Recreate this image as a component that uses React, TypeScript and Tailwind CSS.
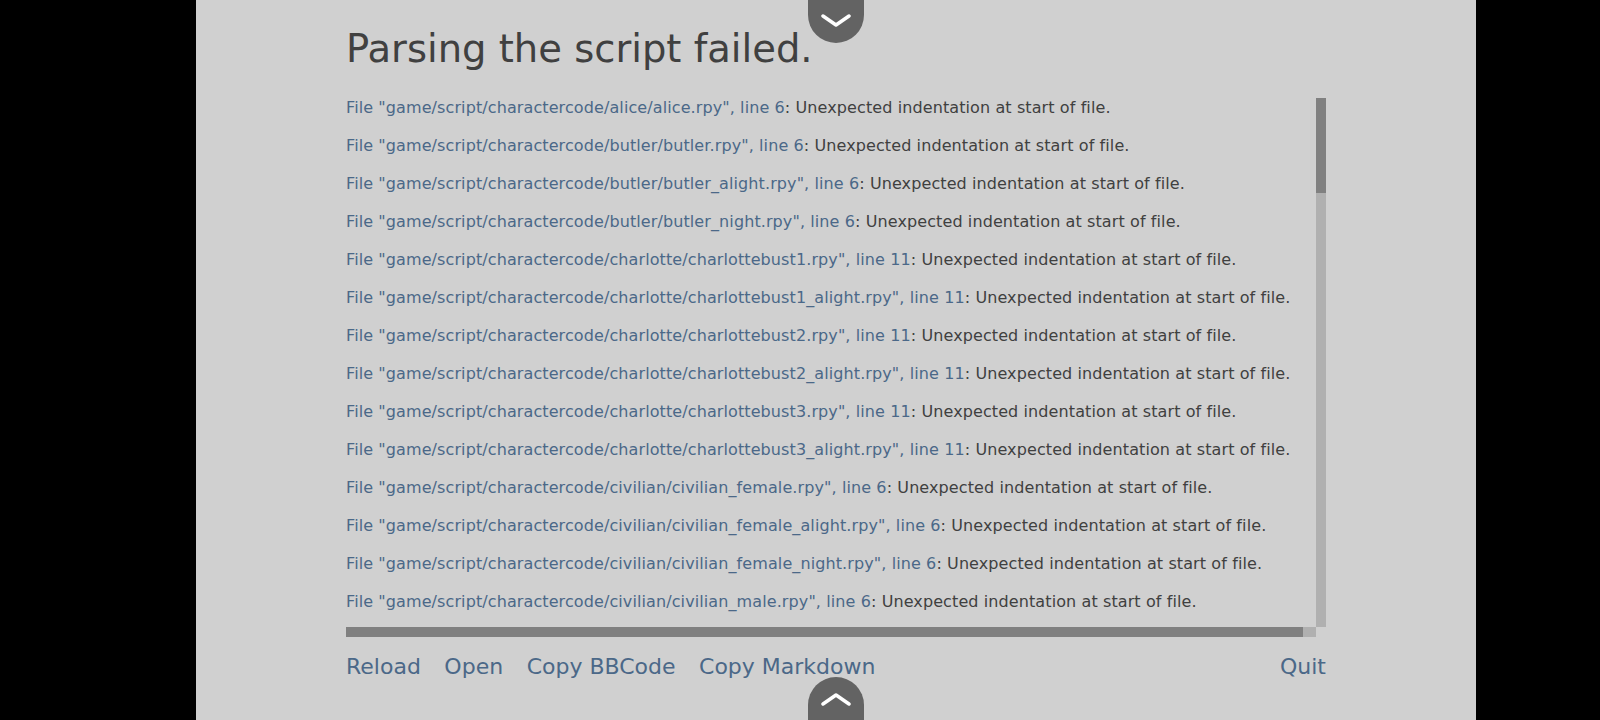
import React from 'react';

const errors: { file: string; line: number }[] = [
  { file: 'game/script/charactercode/alice/alice.rpy', line: 6 },
  { file: 'game/script/charactercode/butler/butler.rpy', line: 6 },
  { file: 'game/script/charactercode/butler/butler_alight.rpy', line: 6 },
  { file: 'game/script/charactercode/butler/butler_night.rpy', line: 6 },
  { file: 'game/script/charactercode/charlotte/charlottebust1.rpy', line: 11 },
  { file: 'game/script/charactercode/charlotte/charlottebust1_alight.rpy', line: 11 },
  { file: 'game/script/charactercode/charlotte/charlottebust2.rpy', line: 11 },
  { file: 'game/script/charactercode/charlotte/charlottebust2_alight.rpy', line: 11 },
  { file: 'game/script/charactercode/charlotte/charlottebust3.rpy', line: 11 },
  { file: 'game/script/charactercode/charlotte/charlottebust3_alight.rpy', line: 11 },
  { file: 'game/script/charactercode/civilian/civilian_female.rpy', line: 6 },
  { file: 'game/script/charactercode/civilian/civilian_female_alight.rpy', line: 6 },
  { file: 'game/script/charactercode/civilian/civilian_female_night.rpy', line: 6 },
  { file: 'game/script/charactercode/civilian/civilian_male.rpy', line: 6 },
];

const Chevron: React.FC<{ up?: boolean }> = ({ up }) => (
  <svg width="32" height="14" viewBox="0 0 32 14" fill="none">
    <path
      d={up ? 'M3 12 L16 3 L29 12' : 'M3 2 L16 11 L29 2'}
      stroke="white"
      strokeWidth="3.5"
      strokeLinecap="round"
      strokeLinejoin="round"
    />
  </svg>
);

const App: React.FC = () => {
  const actions = ['Reload', 'Open', 'Copy BBCode', 'Copy Markdown'];

  return (
    <div className="w-[1600px] h-[720px] bg-black flex overflow-hidden" style={{ fontFamily: '"DejaVu Sans", Verdana, sans-serif' }}>
      <div className="relative ml-[196px] w-[1280px] h-full bg-[#d0d0d0] px-[150px] pt-[30px] flex flex-col">
        {/* top toggle */}
        <div className="absolute top-0 left-1/2 -translate-x-1/2 w-[56px] h-[43px] rounded-b-[28px] bg-[#636363] flex items-end justify-center pb-[15px]">
          <Chevron />
        </div>

        <h1 className="text-[38.5px] leading-[38px] text-[#404040]">Parsing the script failed.</h1>

        <div className="mt-[30px] flex flex-col">
          <div className="flex h-[529px]">
            <div className="flex-1 overflow-hidden pt-[1px] flex flex-col gap-[20px] text-[16px] leading-[18px] tracking-[0.1px] whitespace-nowrap">
              {errors.map((e) => (
                <div key={e.file}>
                  <span className="text-[#4b6888]">
                    File "{e.file}", line {e.line}
                  </span>
                  <span className="text-[#404040]">: Unexpected indentation at start of file.</span>
                </div>
              ))}
            </div>
            <div className="w-[10px] bg-[#b0b0b0]">
              <div className="h-[95px] bg-[#808080]" />
            </div>
          </div>
          <div className="flex h-[10px]">
            <div className="flex-1 bg-[#b0b0b0]">
              <div className="w-[957px] h-full bg-[#808080]" />
            </div>
            <div className="w-[10px]" />
          </div>
        </div>

        <div className="mt-[19px] flex items-center gap-[23.5px] text-[22px] leading-[22px] text-[#4b6888]">
          {actions.map((a) => (
            <span key={a}>{a}</span>
          ))}
          <span className="ml-auto">Quit</span>
        </div>

        {/* bottom toggle */}
        <div className="absolute bottom-0 left-1/2 -translate-x-1/2 w-[56px] h-[43px] rounded-t-[28px] bg-[#636363] flex items-start justify-center pt-[15px]">
          <Chevron up />
        </div>
      </div>
    </div>
  );
};

export default App;
